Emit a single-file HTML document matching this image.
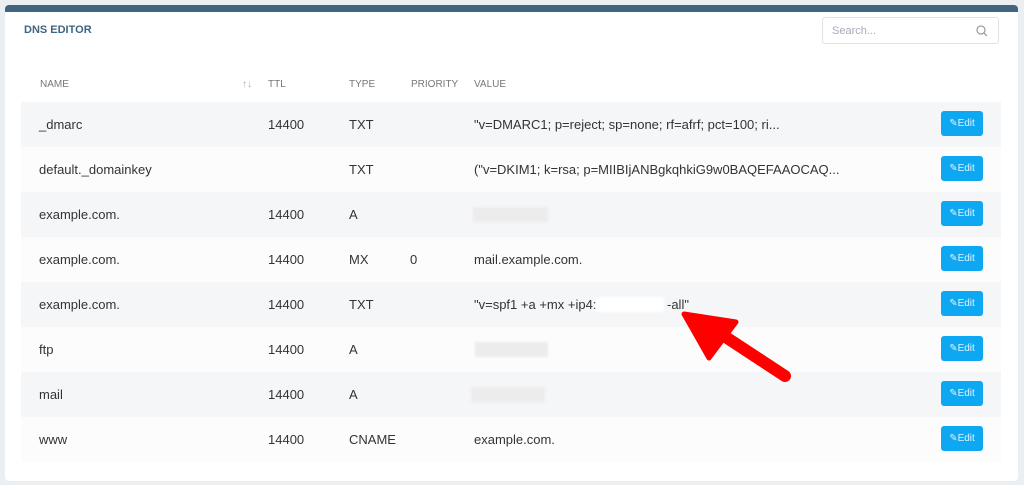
<!DOCTYPE html>
<html><head><style>
body{margin:0;width:1024px;height:485px;background:#eceff1;font-family:"Liberation Sans",sans-serif;position:relative;overflow:hidden}
.card{position:absolute;left:5px;top:5px;width:1013px;height:476px;background:#fff;border-radius:4px;overflow:hidden}
.band{position:absolute;left:0;top:0;right:0;height:7px;background:#3f6580}
.title{position:absolute;left:19px;top:19px;font-size:11px;font-weight:bold;color:#3f6580}
.search{position:absolute;left:817px;top:12px;width:177px;height:27px;border:1px solid #dde3e8;border-radius:3px;font-size:11px;color:#aab;line-height:27px;padding-left:9px;box-sizing:border-box}
.hd{position:absolute;top:74px;font-size:10px;color:#777}
.row{position:absolute;left:16px;width:980px;height:45px;font-size:13px;color:#333}
.row span{position:absolute;top:15px;white-space:nowrap}
.odd{background:#f5f6f8}.even{background:#fcfcfd}
.btn{position:absolute;left:920px;top:9px;width:42px;height:25px;background:#0ea8f2;border-radius:3px;color:#dff3ff;font-size:10px;line-height:25px;text-align:center}
.blur{position:absolute;top:15px;height:15px;background:#ececec;filter:blur(1px)}
</style></head><body>
<div class="card"><div class="band"></div>
<div class="title">DNS EDITOR</div>
<div class="search">Search...<svg style="position:absolute;right:10px;top:7px" width="12" height="12" viewBox="0 0 12 12"><circle cx="5" cy="5" r="4" fill="none" stroke="#999" stroke-width="1.2"/><path d="M8 8l3 3" stroke="#999" stroke-width="1.2"/></svg></div>
<div class="hd" style="left:35px">NAME</div><div class="hd" style="left:237px;color:#aaa">↑↓</div>
<div class="hd" style="left:263px">TTL</div><div class="hd" style="left:344px">TYPE</div>
<div class="hd" style="left:406px">PRIORITY</div><div class="hd" style="left:469px">VALUE</div>
<div class="row odd" style="top:97px"><span style="left:18px">_dmarc</span><span style="left:247px">14400</span><span style="left:328px">TXT</span><span style="left:453px">"v=DMARC1; p=reject; sp=none; rf=afrf; pct=100; ri...</span><div class="btn">✎Edit</div></div>
<div class="row even" style="top:142px"><span style="left:18px">default._domainkey</span><span style="left:328px">TXT</span><span style="left:453px">("v=DKIM1; k=rsa; p=MIIBIjANBgkqhkiG9w0BAQEFAAOCAQ...</span><div class="btn">✎Edit</div></div>
<div class="row odd" style="top:187px"><span style="left:18px">example.com.</span><span style="left:247px">14400</span><span style="left:328px">A</span><div class="blur" style="left:452px;width:75px"></div><div class="btn">✎Edit</div></div>
<div class="row even" style="top:232px"><span style="left:18px">example.com.</span><span style="left:247px">14400</span><span style="left:328px">MX</span><span style="left:389px">0</span><span style="left:453px">mail.example.com.</span><div class="btn">✎Edit</div></div>
<div class="row odd" style="top:277px"><span style="left:18px">example.com.</span><span style="left:247px">14400</span><span style="left:328px">TXT</span><span style="left:453px">"v=spf1 +a +mx +ip4:</span><div class="blur" style="left:575px;width:68px;background:#fff"></div><span style="left:646px">-all"</span><div class="btn">✎Edit</div></div>
<div class="row even" style="top:322px"><span style="left:18px">ftp</span><span style="left:247px">14400</span><span style="left:328px">A</span><div class="blur" style="left:454px;width:73px"></div><div class="btn">✎Edit</div></div>
<div class="row odd" style="top:367px"><span style="left:18px">mail</span><span style="left:247px">14400</span><span style="left:328px">A</span><div class="blur" style="left:450px;width:74px"></div><div class="btn">✎Edit</div></div>
<div class="row even" style="top:412px"><span style="left:18px">www</span><span style="left:247px">14400</span><span style="left:328px">CNAME</span><span style="left:453px">example.com.</span><div class="btn">✎Edit</div></div>
</div>
<svg style="position:absolute;left:0;top:0" width="1024" height="485"><path d="M785 376L718 332" stroke="#f00" stroke-width="12" stroke-linecap="round"/><path d="M684 314L736 322L709 358Z" fill="#f00" stroke="#f00" stroke-width="5" stroke-linejoin="round"/></svg>
</body></html>
